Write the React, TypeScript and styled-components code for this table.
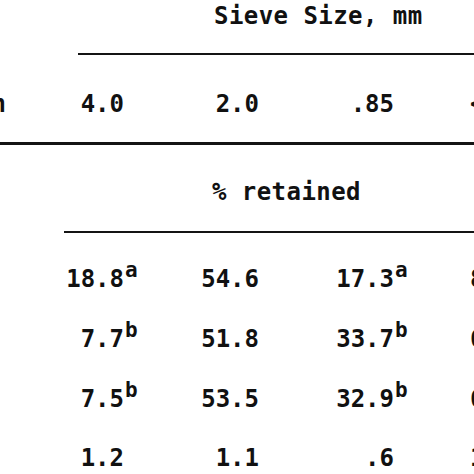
import React from 'react';
import styled, {createGlobalStyle} from 'styled-components';

// Scanned sieve-analysis table, cropped: the label column and the
// last size column run off the left and right edges of the view.

const GlobalStyle = createGlobalStyle`
  html, body {
    margin: 0;
    padding: 0;
    background: #ffffff;
  }
  body {
    width: 474px;
    height: 474px;
    overflow: hidden;
  }
`;

// ── Styled components ──────────────────────────────────────────────

const Viewport = styled.div`
  width: 474px;
  height: 474px;
  overflow: hidden;
  background: #ffffff;
`;

// the table is wider than the view; a negative margin hides the label column
const Sheet = styled.div`
  display: flex;
  flex-direction: column;
  width: 675px;
  margin-left: -129px;
  font-family: 'DejaVu Sans Mono', 'Liberation Mono', monospace;
  font-weight: bold;
  font-size: 24px;
  color: #111111;
`;

const Row = styled.div<{$top: number}>`
  display: grid;
  grid-template-columns: repeat(5, 135px);
  margin-top: ${p => p.$top}px;
  height: 28px;
  line-height: 28px;
`;

const Label = styled.div`
  text-align: right;
  white-space: nowrap;
`;

const Cell = styled.div`
  text-align: right;
  padding-right: 17px;
  white-space: nowrap;
`;

const EdgeCell = styled.div`
  text-align: left;
  padding-left: 59px;
  white-space: nowrap;
`;

const Caption = styled.div<{$indent: number}>`
  grid-column: 2 / -1;
  padding-left: ${p => p.$indent}px;
  letter-spacing: 0.45px;
  white-space: nowrap;
`;

const Rule = styled.div<{$top: number; $inset: number; $weight: number}>`
  margin-top: ${p => p.$top}px;
  margin-left: ${p => p.$inset}px;
  height: ${p => p.$weight}px;
  background: #141414;
`;

const Value = styled.span`
  position: relative;
  display: inline-block;
`;

const Note = styled.span`
  position: absolute;
  left: 100%;
  top: -9px;
  margin-left: 1px;
  font-size: 21px;
`;

// ── Data ───────────────────────────────────────────────────────────

interface Entry {
  value: string;
  note?: string;
}

const sizes = ['4.0', '2.0', '.85', '<.85'];

const rows: {top: number; cells: Entry[]}[] = [
  {
    top: 32,
    cells: [
      {value: '18.8', note: 'a'},
      {value: '54.6'},
      {value: '17.3', note: 'a'},
      {value: '8.8'},
    ],
  },
  {
    top: 32,
    cells: [
      {value: '7.7', note: 'b'},
      {value: '51.8'},
      {value: '33.7', note: 'b'},
      {value: '6.8'},
    ],
  },
  {
    top: 32,
    cells: [
      {value: '7.5', note: 'b'},
      {value: '53.5'},
      {value: '32.9', note: 'b'},
      {value: '6.1'},
    ],
  },
  {
    top: 31,
    cells: [{value: '1.2'}, {value: '1.1'}, {value: '.6'}, {value: '1.0'}],
  },
];

const Number: React.FC<Entry> = ({value, note}) => (
  <Value>
    {value}
    {note && <Note>{note}</Note>}
  </Value>
);

// ── Component ──────────────────────────────────────────────────────

export default function App() {
  return (
    <Viewport>
      <GlobalStyle />
      <Sheet>
        <Row $top={2}>
          <Label />
          <Caption $indent={208}>Sieve Size, mm</Caption>
        </Row>
        <Rule $top={23} $inset={207} $weight={2} />

        <Row $top={35}>
          <Label>Fraction</Label>
          {sizes.slice(0, 3).map(s => (
            <Cell key={s}>{s}</Cell>
          ))}
          <EdgeCell>{sizes[3]}</EdgeCell>
        </Row>
        <Rule $top={24} $inset={0} $weight={3} />

        <Row $top={33}>
          <Label />
          <Caption $indent={206}>% retained</Caption>
        </Row>
        <Rule $top={25} $inset={193} $weight={2} />

        {rows.map((row, i) => (
          <Row key={i} $top={row.top}>
            <Label />
            {row.cells.slice(0, 3).map((c, j) => (
              <Cell key={j}>
                <Number {...c} />
              </Cell>
            ))}
            <EdgeCell>
              <Number {...row.cells[3]} />
            </EdgeCell>
          </Row>
        ))}
      </Sheet>
    </Viewport>
  );
}
